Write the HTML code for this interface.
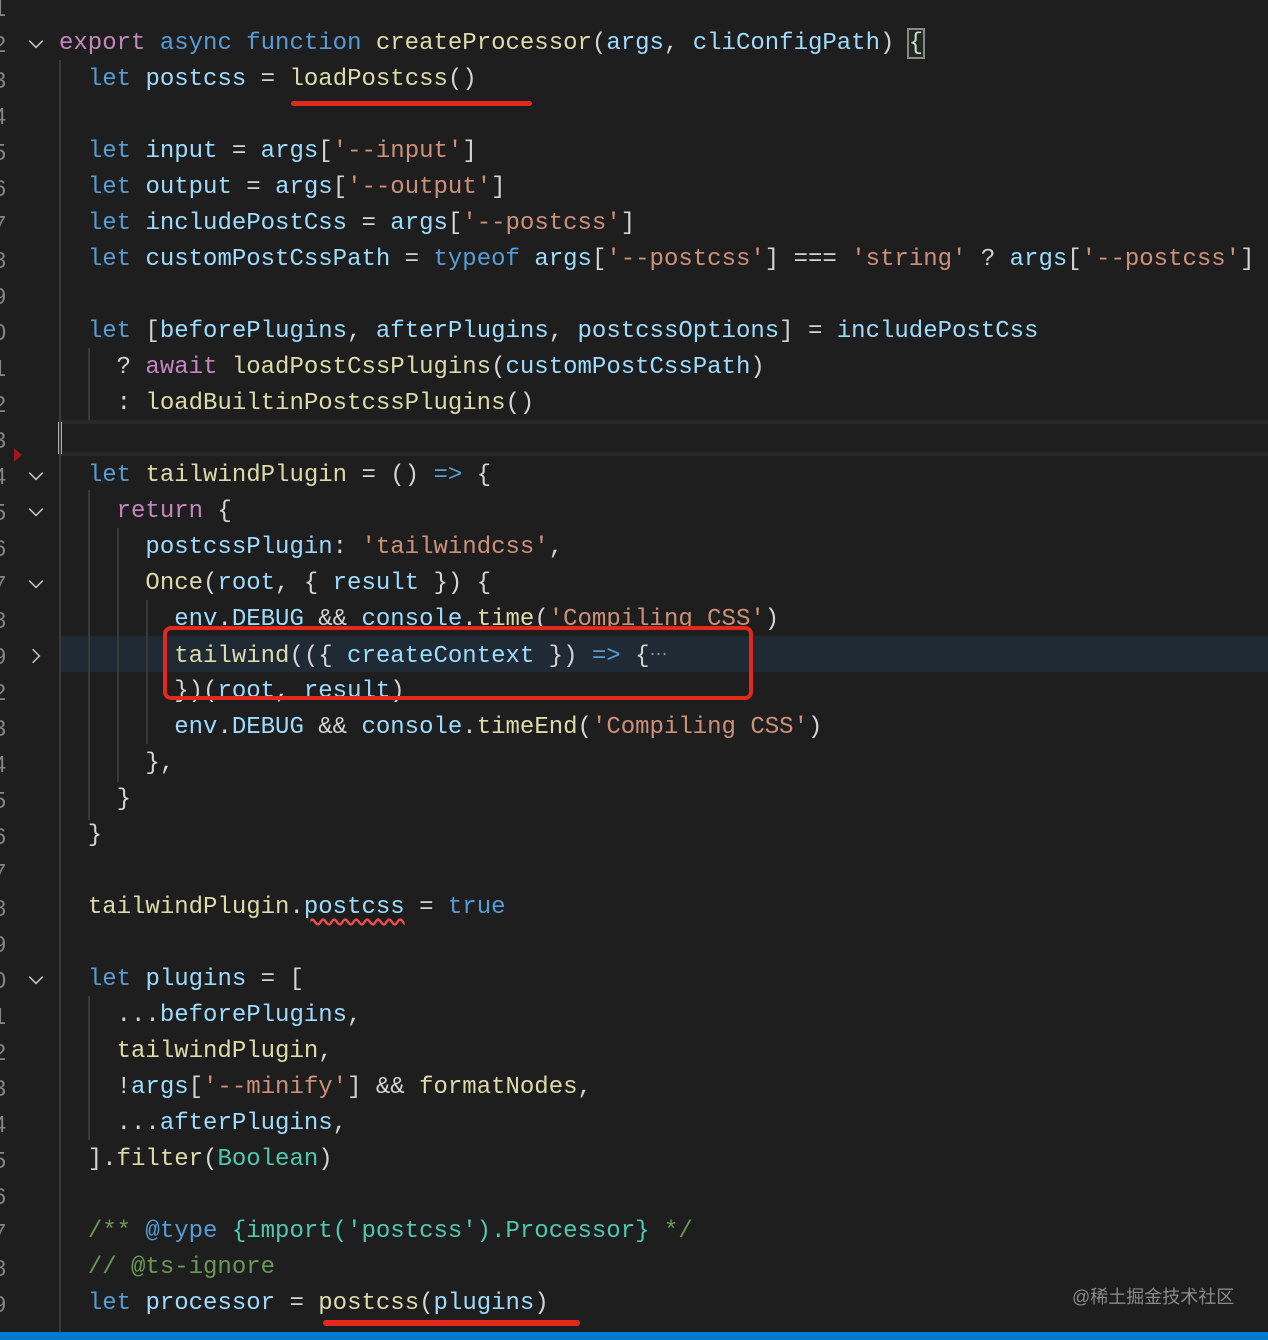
<!DOCTYPE html>
<html><head><meta charset="utf-8">
<style>
html,body{margin:0;padding:0;background:#1e1e1e;width:1268px;height:1340px;overflow:hidden;position:relative}
.r{position:absolute;left:59px;height:36px;line-height:36px;font-family:"Liberation Mono",monospace;font-size:24px;white-space:pre;color:#d4d4d4}
.n{position:absolute;left:-10px;width:16px;text-align:right;height:36px;line-height:36px;font-family:"Liberation Sans",sans-serif;font-size:23px;color:#858585}
.k{color:#569cd6}.c{color:#c586c0}.f{color:#dcdcaa}.v{color:#9cdcfe}.s{color:#ce9178}.t{color:#4ec9b0}.m{color:#6a9955}
.chev{position:absolute;left:27px;width:18px;height:18px}
.g{position:absolute;width:2px;background:#3a3a3a}
</style></head><body>
<div style="position:absolute;left:59px;top:420px;width:1209px;height:4px;background:#282828"></div>
<div style="position:absolute;left:59px;top:452px;width:1209px;height:4px;background:#282828"></div>
<div style="position:absolute;left:58px;top:422px;width:4px;height:32px;background:#aeafad"></div>
<div style="position:absolute;left:59px;top:636px;width:1209px;height:36px;background:#1f2a35"></div>
<div class="g" style="left:59px;top:60px;height:1272px"></div>
<div class="g" style="left:88px;top:348px;height:72px"></div>
<div class="g" style="left:88px;top:490px;height:330px"></div>
<div class="g" style="left:117px;top:528px;height:254px"></div>
<div class="g" style="left:146px;top:600px;height:144px"></div>
<div class="g" style="left:88px;top:996px;height:144px"></div>
<svg style="position:absolute;left:14px;top:448px" width="10" height="16"><polygon points="0,0 8,7 0,14" fill="#a1151c"/></svg>

<div id="lines"></div>
<script>
const rows=[
"",
'<span class="c">export</span> <span class="k">async</span> <span class="k">function</span> <span class="f">createProcessor</span>(<span class="v">args</span>, <span class="v">cliConfigPath</span>) <span style="outline:2px solid #888;background:#1f2a1f">{</span>',
'  <span class="k">let</span> <span class="v">postcss</span> = <span class="f">loadPostcss</span>()',
'',
'  <span class="k">let</span> <span class="v">input</span> = <span class="v">args</span>[<span class="s">\'--input\'</span>]',
'  <span class="k">let</span> <span class="v">output</span> = <span class="v">args</span>[<span class="s">\'--output\'</span>]',
'  <span class="k">let</span> <span class="v">includePostCss</span> = <span class="v">args</span>[<span class="s">\'--postcss\'</span>]',
'  <span class="k">let</span> <span class="v">customPostCssPath</span> = <span class="k">typeof</span> <span class="v">args</span>[<span class="s">\'--postcss\'</span>] === <span class="s">\'string\'</span> ? <span class="v">args</span>[<span class="s">\'--postcss\'</span>]',
'',
'  <span class="k">let</span> [<span class="v">beforePlugins</span>, <span class="v">afterPlugins</span>, <span class="v">postcssOptions</span>] = <span class="v">includePostCss</span>',
'    ? <span class="c">await</span> <span class="f">loadPostCssPlugins</span>(<span class="v">customPostCssPath</span>)',
'    : <span class="f">loadBuiltinPostcssPlugins</span>()',
'',
'  <span class="k">let</span> <span class="f">tailwindPlugin</span> = () <span class="k">=&gt;</span> {',
'    <span class="c">return</span> {',
'      <span class="v">postcssPlugin</span>: <span class="s">\'tailwindcss\'</span>,',
'      <span class="f">Once</span>(<span class="v">root</span>, { <span class="v">result</span> }) {',
'        <span class="v">env</span>.<span class="v">DEBUG</span> &amp;&amp; <span class="v">console</span>.<span class="f">time</span>(<span class="s">\'Compiling CSS\'</span>)',
'        <span class="f">tailwind</span>(({ <span class="v">createContext</span> }) <span class="k">=&gt;</span> {<span style="color:#999;font-size:18px;vertical-align:2px">&#8943;</span>',
'        })(<span class="v">root</span>, <span class="v">result</span>)',
'        <span class="v">env</span>.<span class="v">DEBUG</span> &amp;&amp; <span class="v">console</span>.<span class="f">timeEnd</span>(<span class="s">\'Compiling CSS\'</span>)',
'      },',
'    }',
'  }',
'',
'  <span class="f">tailwindPlugin</span>.<span class="v" style="text-decoration:underline wavy #f14c4c;text-underline-offset:5px">postcss</span> = <span class="k">true</span>',
'',
'  <span class="k">let</span> <span class="v">plugins</span> = [',
'    ...<span class="v">beforePlugins</span>,',
'    <span class="f">tailwindPlugin</span>,',
'    !<span class="v">args</span>[<span class="s">\'--minify\'</span>] &amp;&amp; <span class="f">formatNodes</span>,',
'    ...<span class="v">afterPlugins</span>,',
'  ].<span class="f">filter</span>(<span class="t">Boolean</span>)',
'',
'  <span class="m">/** </span><span class="k">@type</span> <span class="t">{import(\'postcss\').Processor}</span><span class="m"> */</span>',
'  <span class="m">// @ts-ignore</span>',
'  <span class="k">let</span> <span class="v">processor</span> = <span class="f">postcss</span>(<span class="v">plugins</span>)'
];
const nums=[1,2,3,4,5,6,7,8,9,10,11,12,13,14,15,16,17,18,19,22,23,24,25,26,27,28,29,30,31,32,33,34,35,36,37,38,39,40];
const down=[1,13,14,16,27], right=[18];
let h='';
for(let i=0;i<=37;i++){
  const top=-10+36*i;
  h+=`<div class="n" style="top:${top}px">${nums[i]%10}</div>`;
  if(i<rows.length) h+=`<div class="r" style="top:${top}px">${rows[i]}</div>`;
  if(down.includes(i)) h+=`<svg class="chev" style="top:${top+9}px" viewBox="0 0 16 16"><path d="M2 5 L8 11 L14 5" fill="none" stroke="#c5c5c5" stroke-width="1.4"/></svg>`;
  if(right.includes(i)) h+=`<svg class="chev" style="top:${top+9}px" viewBox="0 0 16 16"><path d="M5 2 L11 8 L5 14" fill="none" stroke="#c5c5c5" stroke-width="1.4"/></svg>`;
}
document.getElementById('lines').innerHTML=h;
</script>
<div style="position:absolute;left:291px;top:101px;width:241px;height:5px;background:#e3281e;border-radius:3px"></div>
<div style="position:absolute;left:163px;top:626px;width:582px;height:66px;border:4px solid #e3281e;border-radius:8px"></div>
<div style="position:absolute;left:323px;top:1320px;width:257px;height:6px;background:#e3281e;border-radius:3px"></div>
<div style="position:absolute;left:1072px;top:1283px;font-family:'Liberation Sans','Noto Sans CJK SC',sans-serif;font-size:18px;color:#8a8a8a">@稀土掘金技术社区</div>
<div style="position:absolute;left:0;top:1332px;width:1268px;height:8px;background:#007acc"></div>
</body></html>
